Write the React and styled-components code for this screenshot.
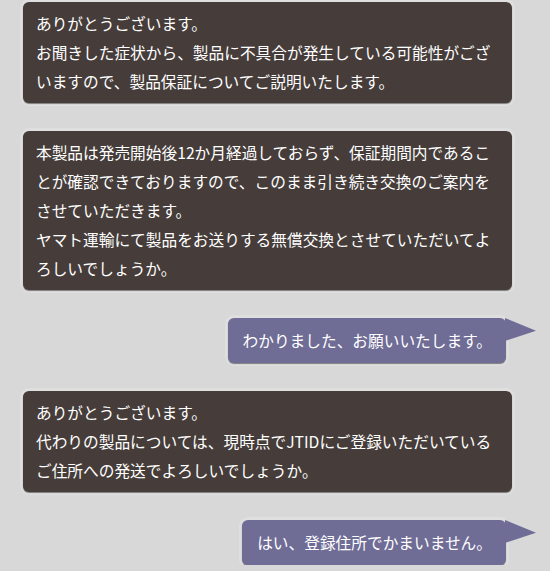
import React from "react";
import styled, { createGlobalStyle } from "styled-components";

const GlobalStyle = createGlobalStyle`
	html,
	body {
		margin: 0;
		padding: 0;
		background: #d8d8d8;
	}
`;

const Chat = styled.div`
	display: flex;
	flex-direction: column;
	gap: 28px;
	padding: 2px 38px 0 23px;

	font-family: "Noto Sans CJK JP", "Noto Sans", sans-serif;
	font-size: 15.7px;
	line-height: 29px;
	color: #ffffff;
`;

const Bubble = styled.div`
	position: relative;
	align-self: ${(p) => (p.$mine ? "flex-end" : "stretch")};
	margin-right: ${(p) => (p.$mine ? "6px" : "0")};
	padding: ${(p) => (p.$mine ? "8px 14px 8px 15px" : "7px 13px")};
	border-radius: 6px;

	background: ${(p) => (p.$mine ? "#6f6c96" : "#463d3a")};
	box-shadow: 0 1px 1px rgba(0, 0, 0, 0.45),
		0 0 0 3px rgba(255, 255, 255, 0.18);
	white-space: nowrap;

	/* tail of the user's bubbles */
	&::after {
		content: ${(p) => (p.$mine ? '""' : "none")};
		position: absolute;
		left: calc(100% - 1px);
		top: 0;
		width: 31px;
		height: 23px;
		background: #6f6c96;
		clip-path: polygon(0 0, 100% 55%, 0 100%);
	}
`;

const messages = [
	{
		mine: false,
		lines: [
			"ありがとうございます。",
			"お聞きした症状から、製品に不具合が発生している可能性がござ",
			"いますので、製品保証についてご説明いたします。",
		],
	},
	{
		mine: false,
		lines: [
			"本製品は発売開始後12か月経過しておらず、保証期間内であるこ",
			"とが確認できておりますので、このまま引き続き交換のご案内を",
			"させていただきます。",
			"ヤマト運輸にて製品をお送りする無償交換とさせていただいてよ",
			"ろしいでしょうか。",
		],
	},
	{ mine: true, lines: ["わかりました、お願いいたします。"] },
	{
		mine: false,
		lines: [
			"ありがとうございます。",
			"代わりの製品については、現時点でJTIDにご登録いただいている",
			"ご住所への発送でよろしいでしょうか。",
		],
	},
	{ mine: true, lines: ["はい、登録住所でかまいません。"] },
];

function App() {
	return (
		<>
			<GlobalStyle />
			<Chat>
				{messages.map((msg, i) => (
					<Bubble key={i} $mine={msg.mine}>
						{msg.lines.map((line, j) => (
							<React.Fragment key={j}>
								{j > 0 && <br />}
								{line}
							</React.Fragment>
						))}
					</Bubble>
				))}
			</Chat>
		</>
	);
}

export default App;
